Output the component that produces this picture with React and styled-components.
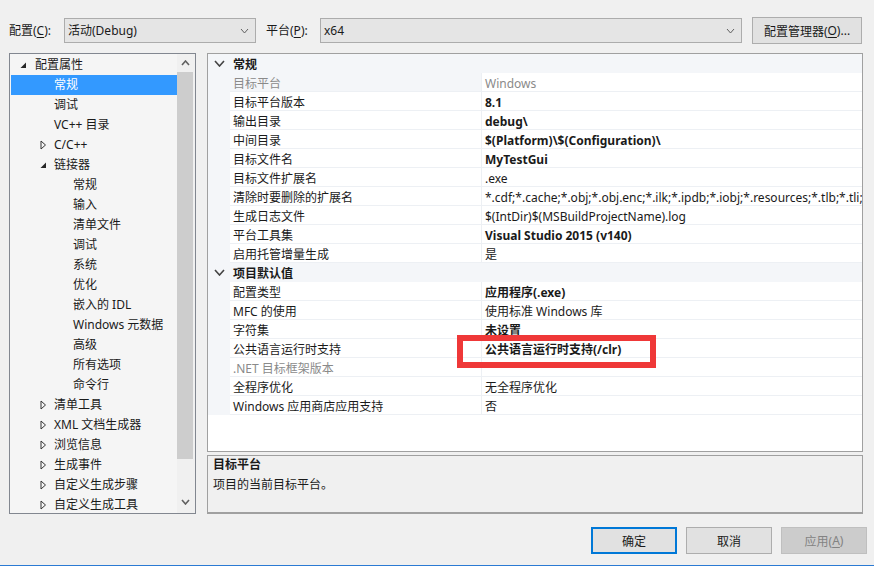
import styled, { createGlobalStyle } from "styled-components";

const Global = createGlobalStyle`
  html, body {
    margin: 0;
    padding: 0;
    background: #f0f0f0;
  }
  body {
    font-family: "Noto Sans", "Noto Sans CJK SC", sans-serif;
    font-size: 12px;
    color: #1a1a1a;
  }
`;

const treeItems = [
  { level: 0, label: "配置属性", arrow: "open" },
  { level: 1, label: "常规", selected: true },
  { level: 1, label: "调试" },
  { level: 1, label: "VC++ 目录" },
  { level: 1, label: "C/C++", arrow: "closed" },
  { level: 1, label: "链接器", arrow: "open" },
  { level: 2, label: "常规" },
  { level: 2, label: "输入" },
  { level: 2, label: "清单文件" },
  { level: 2, label: "调试" },
  { level: 2, label: "系统" },
  { level: 2, label: "优化" },
  { level: 2, label: "嵌入的 IDL" },
  { level: 2, label: "Windows 元数据" },
  { level: 2, label: "高级" },
  { level: 2, label: "所有选项" },
  { level: 2, label: "命令行" },
  { level: 1, label: "清单工具", arrow: "closed" },
  { level: 1, label: "XML 文档生成器", arrow: "closed" },
  { level: 1, label: "浏览信息", arrow: "closed" },
  { level: 1, label: "生成事件", arrow: "closed" },
  { level: 1, label: "自定义生成步骤", arrow: "closed" },
  { level: 1, label: "自定义生成工具", arrow: "closed" },
];

const groups = [
  {
    title: "常规",
    rows: [
      { name: "目标平台", value: "Windows", disabled: true, selected: true },
      { name: "目标平台版本", value: "8.1", bold: true },
      { name: "输出目录", value: "debug\\", bold: true },
      { name: "中间目录", value: "$(Platform)\\$(Configuration)\\", bold: true },
      { name: "目标文件名", value: "MyTestGui", bold: true },
      { name: "目标文件扩展名", value: ".exe" },
      {
        name: "清除时要删除的扩展名",
        value:
          "*.cdf;*.cache;*.obj;*.obj.enc;*.ilk;*.ipdb;*.iobj;*.resources;*.tlb;*.tli;*.tlh;*.tmp;*.rsp;*.pgc;*.pgd",
      },
      { name: "生成日志文件", value: "$(IntDir)$(MSBuildProjectName).log" },
      { name: "平台工具集", value: "Visual Studio 2015 (v140)", bold: true },
      { name: "启用托管增量生成", value: "是" },
    ],
  },
  {
    title: "项目默认值",
    rows: [
      { name: "配置类型", value: "应用程序(.exe)", bold: true },
      { name: "MFC 的使用", value: "使用标准 Windows 库" },
      { name: "字符集", value: "未设置", bold: true },
      { name: "公共语言运行时支持", value: "公共语言运行时支持(/clr)", bold: true },
      { name: ".NET 目标框架版本", value: "", disabled: true },
      { name: "全程序优化", value: "无全程序优化" },
      { name: "Windows 应用商店应用支持", value: "否" },
    ],
  },
];

const Chevron = ({ w = 7, h = 4, color = "#606060", sw = 1 }) => (
  <svg width={w + 2} height={h + 2} viewBox={`-1 -1 ${w + 2} ${h + 2}`}>
    <polyline points={`0,0 ${w / 2},${h} ${w},0`} fill="none" stroke={color} strokeWidth={sw} />
  </svg>
);

const ChevronUp = ({ w = 7, h = 4, color = "#606060", sw = 1.6 }) => (
  <svg width={w + 2} height={h + 2} viewBox={`-1 -1 ${w + 2} ${h + 2}`}>
    <polyline points={`0,${h} ${w / 2},0 ${w},${h}`} fill="none" stroke={color} strokeWidth={sw} />
  </svg>
);

const TreeArrow = ({ kind }) => {
  if (kind === "open")
    return (
      <svg width="7" height="7" viewBox="0 0 7 7">
        <polygon points="6,0.5 6,6 0.5,6" fill="#262626" />
      </svg>
    );
  if (kind === "closed")
    return (
      <svg width="7" height="10" viewBox="0 0 7 10">
        <polygon points="1,1 5.5,5 1,9" fill="none" stroke="#333" strokeWidth="1" />
      </svg>
    );
  return null;
};

export default function App() {
  return (
    <Window>
      <Global />
      <TopBar>
        <FieldLabel $width={55}>
          配置(<u>C</u>):
        </FieldLabel>
        <Combo $width={192}>
          <span>活动(Debug)</span>
          <Chevron />
        </Combo>
        <FieldLabel $width={54} $gap={10}>
          平台(<u>P</u>):
        </FieldLabel>
        <Combo $width={422}>
          <span>x64</span>
          <Chevron />
        </Combo>
        <ManagerButton>
          配置管理器(<u>O</u>)...
        </ManagerButton>
      </TopBar>

      <Main>
        <Tree>
          <TreeList>
            {treeItems.map((it, i) => (
              <TreeRow key={i} $level={it.level} $selected={it.selected}>
                <ArrowBox $level={it.level}>
                  <TreeArrow kind={it.arrow} />
                </ArrowBox>
                <span>{it.label}</span>
              </TreeRow>
            ))}
          </TreeList>
          <ScrollBar>
            <ScrollArrow>
              <ChevronUp />
            </ScrollArrow>
            <Thumb />
            <ScrollArrow $bottom>
              <Chevron sw={1.6} />
            </ScrollArrow>
          </ScrollBar>
        </Tree>

        <RightCol>
          <Grid>
            {groups.map((g) => (
              <div key={g.title}>
                <CategoryRow>
                  <Gutter>
                    <Chevron w={9} h={5} color="#444" sw={1.6} />
                  </Gutter>
                  <CategoryTitle>{g.title}</CategoryTitle>
                </CategoryRow>
                {g.rows.map((r) => (
                  <PropRow key={r.name}>
                    <Gutter />
                    <NameCell $disabled={r.disabled} $selected={r.selected}>
                      {r.name}
                    </NameCell>
                    <ValueCell $bold={r.bold} $disabled={r.disabled}>
                      {r.value}
                    </ValueCell>
                  </PropRow>
                ))}
              </div>
            ))}
            <Highlight />
          </Grid>
          <Description>
            <DescTitle>目标平台</DescTitle>
            <DescText>项目的当前目标平台。</DescText>
          </Description>
        </RightCol>
      </Main>

      <Footer>
        <DialogButton $primary>确定</DialogButton>
        <DialogButton>取消</DialogButton>
        <DialogButton $disabled>
          应用(<u>A</u>)
        </DialogButton>
      </Footer>
      <BottomEdge />
    </Window>
  );
}

const Window = styled.div`
  width: 874px;
  height: 566px;
  display: flex;
  flex-direction: column;
  overflow: hidden;
  background: #f0f0f0;
`;

const TopBar = styled.div`
  display: flex;
  align-items: center;
  height: 27px;
  margin-top: 17px;
  padding-left: 9px;
`;

const FieldLabel = styled.div`
  width: ${(p) => p.$width}px;
  margin-left: ${(p) => p.$gap || 0}px;
  line-height: 16px;
  white-space: nowrap;
  u {
    text-decoration-thickness: 1px;
    text-underline-offset: 2px;
  }
`;

const Combo = styled.div`
  box-sizing: border-box;
  width: ${(p) => p.$width}px;
  height: 25px;
  border: 1px solid #acacac;
  background: #e5e5e5;
  display: flex;
  align-items: center;
  justify-content: space-between;
  padding: 0 6px 0 3px;
  span {
    line-height: 16px;
  }
`;

const ManagerButton = styled.div`
  box-sizing: border-box;
  width: 110px;
  height: 27px;
  margin-left: 10px;
  border: 1px solid #adadad;
  background: #e1e1e1;
  display: flex;
  align-items: center;
  justify-content: center;
  white-space: nowrap;
  u {
    text-underline-offset: 2px;
  }
`;

const Main = styled.div`
  display: flex;
  gap: 11px;
  margin-top: 9px;
  padding-left: 9px;
  height: 461px;
`;

const Tree = styled.div`
  box-sizing: border-box;
  width: 187px;
  height: 461px;
  border: 1px solid #828790;
  background: #f5f5f5;
  display: flex;
`;

const TreeList = styled.div`
  width: 166px;
  padding: 1px 0 0 1px;
  overflow: hidden;
`;

const TreeRow = styled.div`
  display: flex;
  align-items: center;
  height: 20px;
  padding-left: ${(p) => 8 + p.$level * 19}px;
  background: ${(p) => (p.$selected ? "#3399ff" : "transparent")};
  color: ${(p) => (p.$selected ? "#ffffff" : "#1a1a1a")};
  white-space: nowrap;
  span {
    line-height: 16px;
  }
`;

const ArrowBox = styled.div`
  width: 16px;
  flex: none;
  display: flex;
  align-items: center;
  padding-left: ${(p) => (p.$level === 0 ? 1 : 2)}px;
  box-sizing: border-box;
`;

const ScrollBar = styled.div`
  width: 18px;
  display: flex;
  flex-direction: column;
  background: #f0f0f0;
`;

const ScrollArrow = styled.div`
  height: 18px;
  display: flex;
  align-items: center;
  justify-content: center;
  padding-right: 2px;
  margin-top: ${(p) => (p.$bottom ? "auto" : "0")};
  margin-bottom: ${(p) => (p.$bottom ? "2px" : "0")};
`;

const Thumb = styled.div`
  width: 16px;
  height: 387px;
  background: #cdcdcd;
`;

const RightCol = styled.div`
  width: 656px;
  display: flex;
  flex-direction: column;
  gap: 3px;
`;

const Grid = styled.div`
  position: relative;
  box-sizing: border-box;
  height: 399px;
  border: 1px solid #a0a0a0;
  background: #ffffff;
  overflow: hidden;
`;

const CategoryRow = styled.div`
  display: flex;
  height: 19px;
  background: #f4f6f9;
`;

const Gutter = styled.div`
  width: 22px;
  flex: none;
  display: flex;
  align-items: center;
  justify-content: center;
  background: #f4f6f9;
`;

const CategoryTitle = styled.div`
  padding: 3px 0 0 3px;
  font-weight: bold;
  line-height: 15px;
`;

const PropRow = styled.div`
  display: flex;
  height: 19px;
`;

const NameCell = styled.div`
  box-sizing: border-box;
  width: 252px;
  flex: none;
  padding: 3px 0 0 3px;
  line-height: 15px;
  border-bottom: 1px solid #edf0f4;
  border-right: 1px solid #edf0f4;
  background: ${(p) => (p.$selected ? "#f4f6f9" : "#ffffff")};
  color: ${(p) => (p.$disabled ? "#8a8a8a" : "#1a1a1a")};
  white-space: nowrap;
`;

const ValueCell = styled.div`
  box-sizing: border-box;
  flex: 1;
  min-width: 0;
  padding: 3px 0 0 3px;
  line-height: 15px;
  border-bottom: 1px solid #edf0f4;
  font-weight: ${(p) => (p.$bold ? "bold" : "normal")};
  color: ${(p) => (p.$disabled ? "#8a8a8a" : "#1a1a1a")};
  white-space: nowrap;
  overflow: hidden;
`;

const Highlight = styled.div`
  position: absolute;
  left: 249px;
  top: 281px;
  width: 199px;
  height: 33px;
  box-sizing: border-box;
  border: 6px solid #ef3838;
  pointer-events: none;
`;

const Description = styled.div`
  box-sizing: border-box;
  height: 59px;
  border: 1px solid #a0a0a0;
  border-bottom-width: 2px;
  padding: 0 5px;
`;

const DescTitle = styled.div`
  font-weight: bold;
  line-height: 18px;
`;

const DescText = styled.div`
  padding-top: 1px;
  line-height: 19px;
`;

const Footer = styled.div`
  display: flex;
  justify-content: flex-end;
  gap: 9px;
  margin-top: 13px;
  padding-right: 7px;
`;

const DialogButton = styled.div`
  box-sizing: border-box;
  width: 86px;
  height: 27px;
  display: flex;
  align-items: center;
  justify-content: center;
  border: ${(p) =>
    p.$primary ? "2px solid #0078d7" : p.$disabled ? "1px solid #bfbfbf" : "1px solid #adadad"};
  background: ${(p) => (p.$disabled ? "#cccccc" : "#e1e1e1")};
  color: ${(p) => (p.$disabled ? "#838383" : "#1a1a1a")};
  u {
    text-underline-offset: 2px;
  }
`;

const BottomEdge = styled.div`
  margin-top: auto;
  height: 1px;
  background: #2b7ad3;
`;
